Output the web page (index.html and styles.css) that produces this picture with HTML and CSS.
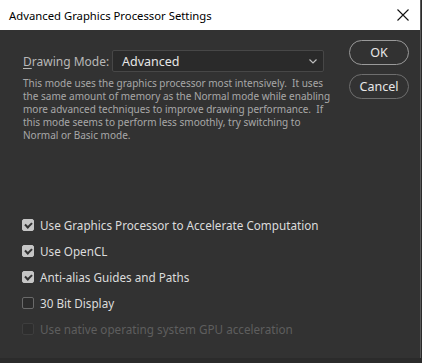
FILE: index.html
```html
<!DOCTYPE html>
<html lang="en">
<head>
  <meta charset="UTF-8">
  <title>Advanced Graphics Processor Settings</title>
  <link rel="stylesheet" href="styles.css">
</head>
<body>
  <div class="window">
    <!-- barra de titulo -->
    <div class="titlebar">
      <span class="title">Advanced Graphics Processor Settings</span>
      <svg class="close" width="12" height="12" viewBox="0 0 12 12">
        <path d="M0.5 0.5 L11.5 11.5 M11.5 0.5 L0.5 11.5" stroke="#111" stroke-width="1.1" fill="none"/>
      </svg>
    </div>

    <div class="content">
      <div class="top">
        <div class="left">
          <div class="mode-row">
            <label class="mode-label"><u>D</u>rawing Mode:</label>
            <div class="select">
              <span>Advanced</span>
              <svg width="8" height="5" viewBox="0 0 8 5">
                <path d="M0.5 0.5 L4 4 L7.5 0.5" stroke="#bdbdbd" stroke-width="1.2" fill="none"/>
              </svg>
            </div>
          </div>
          <p class="desc">This mode uses the graphics processor most intensively.&nbsp; It uses<br>the same amount of memory as the Normal mode while enabling<br>more advanced techniques to improve drawing performance.&nbsp; If<br>this mode seems to perform less smoothly, try switching to<br>Normal or Basic mode.</p>
        </div>
        <div class="buttons">
          <button class="btn">OK</button>
          <button class="btn">Cancel</button>
        </div>
      </div>

      <ul class="options">
        <li><span class="box checked"></span>Use Graphics Processor to Accelerate Computation</li>
        <li><span class="box checked"></span>Use OpenCL</li>
        <li><span class="box checked"></span>Anti-alias Guides and Paths</li>
        <li><span class="box"></span>30 Bit Display</li>
        <li class="disabled"><span class="box"></span>Use native operating system GPU acceleration</li>
      </ul>
    </div>
  </div>
</body>
</html>
```

FILE: styles.css
```css
body {
  margin: 0;
  background: #2b2b2b;
  font-family: "Noto Sans", "Open Sans", sans-serif;
}

.window {
  width: 420px;
  height: 358px;
  background: #323232;
  border-right: 1px solid #5a5a5a;
  display: flex;
  flex-direction: column;
}

.titlebar {
  flex-shrink: 0;
  height: 30px;
  background: #ffffff;
  display: flex;
  align-items: center;
  justify-content: space-between;
  padding: 0 11px 0 9px;
}

.title {
  font-size: 11.3px;
  color: #000;
}

.content {
  padding: 10px 11px 0 22px;
}

.top {
  display: flex;
  justify-content: space-between;
}

.mode-row {
  display: flex;
  align-items: center;
  margin-top: 10px;
}

.mode-label {
  font-size: 12px;
  color: #b8b8b8;
  width: 89px;
  padding-left: 1px;
  white-space: nowrap;
}

.mode-label u {
  text-decoration-thickness: 1px;
  text-underline-offset: 2px;
}

.select {
  width: 195px;
  height: 20px;
  border: 1px solid #474747;
  border-radius: 2px;
  background: #2a2a2a;
  display: flex;
  align-items: center;
  justify-content: space-between;
  padding: 0 6px 0 9px;
  font-size: 12.5px;
  color: #e6e6e6;
}

.desc {
  margin: 5px 0 0 1px;
  font-size: 10px;
  line-height: 13px;
  color: #a8a8a8;
  white-space: nowrap;
}

.buttons {
  display: flex;
  flex-direction: column;
  gap: 9px;
}

.btn {
  width: 60px;
  height: 25px;
  border: 1px solid #9a9a9a;
  border-radius: 13px;
  background: transparent;
  color: #e8e8e8;
  font-family: inherit;
  font-size: 12.5px;
  padding: 0;
}

.btn + .btn {
  border-color: #6e6e6e;
}

.options {
  list-style: none;
  margin: 70px 0 0;
  padding: 0;
}

.options li {
  display: flex;
  align-items: center;
  height: 26px;
  font-size: 11.7px;
  color: #dcdcdc;
}

.box {
  width: 10px;
  height: 10px;
  border: 1px solid #6a6a6a;
  border-radius: 2px;
  background: #2c2c2c;
  margin-right: 6px;
  position: relative;
}

.box.checked {
  background: #c6c6c6;
  border-color: #c6c6c6;
}

.box.checked::after {
  content: "";
  position: absolute;
  left: 3px;
  top: 1px;
  width: 3px;
  height: 5px;
  border: solid #333;
  border-width: 0 2px 2px 0;
  transform: rotate(45deg);
}

.options li.disabled {
  color: #5e5e5e;
}

.options li.disabled .box {
  border-color: #3e3e3e;
  background: #2e2e2e;
}
```
